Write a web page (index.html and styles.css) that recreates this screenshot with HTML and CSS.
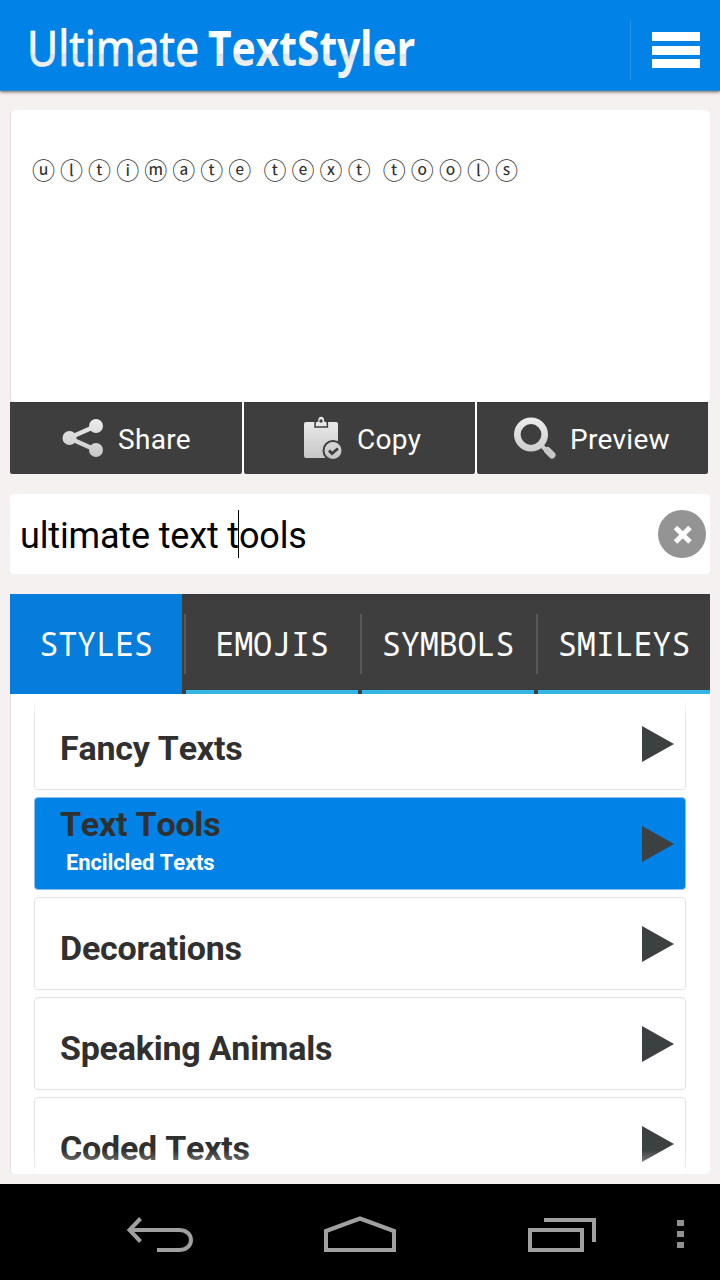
FILE: index.html
```html
<!DOCTYPE html>
<html lang="en">

<head>
  <meta charset="UTF-8" />
  <meta name="viewport" content="width=device-width, initial-scale=1.0" />
  <title>Ultimate TextStyler</title>
  <link rel="stylesheet" href="styles.css">
</head>

<body>
  <header class="header">
    <svg class="logo" width="420" height="80" viewBox="0 0 420 80">
      <defs>
        <linearGradient id="logoFill" gradientUnits="userSpaceOnUse" x1="0" y1="20" x2="0" y2="57">
          <stop offset="0" stop-color="#fff" />
          <stop offset="0.63" stop-color="#fff" />
          <stop offset="0.65" stop-color="#e2e4e6" />
          <stop offset="1" stop-color="#f0f0f0" />
        </linearGradient>
      </defs>
      <text class="logo-light" x="7" y="56" textLength="172" lengthAdjust="spacingAndGlyphs">Ultimate</text>
      <text class="logo-bold" x="188" y="56" textLength="207" lengthAdjust="spacingAndGlyphs">TextStyler</text>
    </svg>
    <button type="button" class="menu-btn" aria-label="Menu">
      <span></span>
      <span></span>
      <span></span>
    </button>
  </header>

  <main class="content">
    <section class="output">ⓤⓛⓣⓘⓜⓐⓣⓔ ⓣⓔⓧⓣ ⓣⓞⓞⓛⓢ</section>

    <div class="actions">
      <button type="button" class="action-btn share">
        <svg width="44" height="44" viewBox="0 0 44 44">
          <defs>
            <linearGradient id="metal" gradientUnits="userSpaceOnUse" x1="0" y1="2" x2="0" y2="44">
              <stop offset="0" stop-color="#ececec" />
              <stop offset="1" stop-color="#c4c4c4" />
            </linearGradient>
          </defs>
          <path d="M35 9 8 21 35 33" fill="none" stroke="url(#metal)" stroke-width="4.5" />
          <circle cx="35" cy="9" r="7" fill="url(#metal)" />
          <circle cx="8.500" cy="21" r="7" fill="url(#metal)" />
          <circle cx="35" cy="33" r="7" fill="url(#metal)" />
        </svg>
        <span>Share</span>
      </button>
      <button type="button" class="action-btn copy">
        <svg width="44" height="44" viewBox="0 0 44 44">
          <rect x="4" y="5" width="34" height="36" rx="2" fill="url(#metal)" />
          <path d="M15 10V6.500q0-2.500 2.500-2.500 0-5 3.700-5t3.700 5q2.500 0 2.500 2.500V10z" fill="url(#metal)" stroke="#3e3e3e" stroke-width="1.500" />
          <circle cx="21" cy="4" r="1.700" fill="#3e3e3e" />
          <circle cx="33" cy="33.500" r="9.500" fill="url(#metal)" stroke="#3e3e3e" stroke-width="2" />
          <path d="m29 33.500 3 3 6-5" fill="none" stroke="#3e3e3e" stroke-width="2.800" />
        </svg>
        <span>Copy</span>
      </button>
      <button type="button" class="action-btn preview">
        <svg width="44" height="44" viewBox="0 0 44 44">
          <path d="m28 28 6 6" stroke="#cdcdcd" stroke-width="4" />
          <path d="m34.500 33.500 4.500 4.500" stroke="#c8c8c8" stroke-width="7" stroke-linecap="round" />
          <circle cx="18" cy="17.500" r="13.700" fill="none" stroke="url(#metal)" stroke-width="6.600" />
        </svg>
        <span>Preview</span>
      </button>
    </div>

    <div class="text-input">
      <span class="typed">ultimate text t<i class="caret"></i>ools</span>
      <button type="button" class="clear-btn" aria-label="Clear">
        <svg width="48" height="48" viewBox="0 0 48 48">
          <circle cx="24" cy="24" r="24" fill="#949494" />
          <path d="m17.500 17.500 14.500 14.500m0-14.500-14.500 14.500" stroke="#fff" stroke-width="5" />
        </svg>
      </button>
    </div>

    <nav class="tabs">
      <a class="tab active">STYLES</a>
      <a class="tab">EMOJIS</a>
      <a class="tab">SYMBOLS</a>
      <a class="tab">SMILEYS</a>
    </nav>

    <section class="list">
      <div class="item">
        <div class="item-text">Fancy Texts</div>
        <svg class="arrow" width="33" height="38" viewBox="0 0 33 38"><path d="M0 1v36l32-18z" /></svg>
      </div>
      <div class="item selected">
        <div class="item-text">Text Tools<small>Encilcled Texts</small></div>
        <svg class="arrow" width="33" height="38" viewBox="0 0 33 38"><path d="M0 1v36l32-18z" /></svg>
      </div>
      <div class="item">
        <div class="item-text">Decorations</div>
        <svg class="arrow" width="33" height="38" viewBox="0 0 33 38"><path d="M0 1v36l32-18z" /></svg>
      </div>
      <div class="item">
        <div class="item-text">Speaking Animals</div>
        <svg class="arrow" width="33" height="38" viewBox="0 0 33 38"><path d="M0 1v36l32-18z" /></svg>
      </div>
      <div class="item">
        <div class="item-text">Coded Texts</div>
        <svg class="arrow" width="33" height="38" viewBox="0 0 33 38"><path d="M0 1v36l32-18z" /></svg>
      </div>
    </section>
  </main>

  <footer class="navbar">
    <svg width="68" height="36" viewBox="0 0 68 36">
      <path d="M14.500 2.500 3.500 14l11 11.500M3 14h50c7 0 12 4 12 10s-5 10-12 10H31" />
    </svg>
    <svg width="74" height="40" viewBox="0 0 74 40">
      <path d="M4 36V17L38 4.500 72 17v19z" />
    </svg>
    <svg width="70" height="36" viewBox="0 0 70 36">
      <path d="M4 14h52v20H4zM18 4h50v22" />
    </svg>
    <svg class="more" width="8" height="30" viewBox="0 0 8 30">
      <path d="M0 1h7v6H0zM0 12h7v6H0zM0 23h7v6H0z" />
    </svg>
  </footer>
</body>

</html>
```
FILE: styles.css
```css
:root {
  --primary: #0082e6;
  --dark: #3e3e3e;
  --background: #f5f1f0;
  --text-color: #303030;
  --border: #e2e2e2;
}

* {
  box-sizing: border-box;
}

body {
  margin: 0;
  width: 720px;
  height: 1280px;
  overflow: hidden;
  display: flex;
  flex-direction: column;
  font-family: Roboto, sans-serif;
  font-kerning: none;
  background: var(--background);
  color: var(--text-color);
}

button {
  border: none;
  padding: 0;
  background: none;
  font-family: inherit;
}

svg {
  display: block;
  flex: none;
}

.header {
  height: 91px;
  flex: none;
  display: flex;
  justify-content: space-between;
  padding: 10px 20px 0;
  background: var(--primary);
  border-bottom: 1px solid #2389d3;
  box-shadow: 0 1px 3px rgba(0, 0, 0, 0.6);
}

.logo {
  overflow: visible;
}

.logo text {
  font-family: "Noto Sans", sans-serif;
  font-size: 49px;
  fill: url(#logoFill);
}

.logo .logo-light {
  font-weight: 400;
  stroke: url(#logoFill);
  stroke-width: 0.7px;
}

.logo .logo-bold {
  font-weight: 700;
}

.menu-btn {
  width: 70px;
  height: 60px;
  margin-top: 10px;
  padding: 12px 0 12px 21px;
  border-left: 1px solid #2b94e8;
  display: flex;
  flex-direction: column;
  justify-content: space-between;
}

.menu-btn span {
  width: 48px;
  height: 9px;
  background: #fff;
}

.content {
  display: flex;
  flex-direction: column;
  padding: 19px 10px 10px;
  height: 1093px;
}

.output {
  height: 292px;
  padding: 46px 21px;
  background: #fff;
  border-left: 1px solid var(--border);
  border-radius: 5px;
  font-family: "DejaVu Sans Mono", "Noto Sans CJK JP", sans-serif;
  font-size: 23px;
  line-height: 30px;
  letter-spacing: 5.050px;
  word-spacing: -11.800px;
}

.actions {
  display: grid;
  grid-template-columns: 232px 231px 231px;
  gap: 2px;
  height: 72px;
  margin-bottom: 20px;
  background: linear-gradient(#fff, #fff) no-repeat 0 0 / 698px 100%;
}

.action-btn {
  display: flex;
  align-items: center;
  background: var(--dark);
  border-top: 1px solid #353535;
  border-radius: 0 0 2px 2px;
  color: #fff;
  font-size: 28px;
  letter-spacing: 0.300px;
}

.action-btn svg {
  margin-right: 13px;
  overflow: visible;
}

.action-btn span {
  margin-top: 2px;
}

.share {
  padding-left: 51px;
}

.copy {
  padding-left: 56px;
}

.preview {
  padding-left: 36px;
}

.text-input {
  height: 80px;
  margin-bottom: 20px;
  padding: 0 4px 0 10px;
  display: flex;
  align-items: center;
  justify-content: space-between;
  background: #fff;
  border-radius: 4px;
  color: #000;
  font-size: 36px;
  letter-spacing: -0.160px;
}

.typed {
  padding-top: 4px;
}

.caret {
  position: relative;
}

.caret::after {
  content: "";
  position: absolute;
  left: -1px;
  top: -5px;
  width: 1px;
  height: 48px;
  background: #000;
}

.tabs {
  height: 100px;
  flex: none;
  display: flex;
  gap: 4px;
  background: linear-gradient(#383838, var(--dark) 6px);
}

.tab {
  width: 172px;
  position: relative;
  display: flex;
  align-items: center;
  justify-content: center;
  border-bottom: 4px solid #33b5e5;
  padding-top: 2px;
  font-family: "Noto Sans Mono", "DejaVu Sans Mono", monospace;
  font-size: 32px;
  letter-spacing: -0.300px;
  color: #fff;
}

.tab.active {
  background: #067ddb;
  border-color: #067ddb;
}

.tab + .tab::before {
  content: "";
  position: absolute;
  left: -2px;
  top: 20px;
  width: 2px;
  height: 60px;
  background: #585858;
}

.list {
  position: relative;
  height: 480px;
  overflow: hidden;
  padding: 3px 24px 0 23px;
  background: #fff;
  border-left: 1px solid var(--border);
  border-radius: 0 0 5px 5px;
}

/* faded top and bottom edges of the scroll area */
.list::before,
.list::after {
  content: "";
  position: absolute;
  left: 0;
  right: 0;
}

.list::before {
  top: 0;
  height: 26px;
  background: linear-gradient(#fff 15%, rgba(255, 255, 255, 0));
}

.list::after {
  bottom: 0;
  height: 24px;
  background: linear-gradient(rgba(255, 255, 255, 0), rgba(255, 255, 255, 0.300) 50%, #fff);
}

.item {
  height: 93px;
  margin-bottom: 7px;
  padding: 0 10px 0 25px;
  display: flex;
  align-items: center;
  justify-content: space-between;
  border: 1px solid var(--border);
  border-radius: 4px;
}

.item-text {
  padding-top: 9px;
  font-size: 34px;
  font-weight: 700;
  line-height: 40px;
  letter-spacing: -0.220px;
}

.item-text small {
  display: block;
  padding-left: 6px;
  font-size: 22px;
  line-height: 37px;
  letter-spacing: -0.120px;
  color: #fff;
}

.selected {
  background: var(--primary);
  border-color: #8cbfe6;
}

.selected .item-text {
  padding: 0 0 3px;
}

.arrow {
  fill: #3c4040;
}

.navbar {
  height: 96px;
  display: flex;
  align-items: center;
  padding: 4px 0 0 126px;
  background: #000;
}

.navbar svg {
  fill: none;
  stroke: #a0a0a0;
  stroke-width: 4;
}

.navbar svg:nth-child(2) {
  margin-left: 128px;
}

.navbar svg:nth-child(3) {
  margin-left: 130px;
}

.navbar .more {
  margin-left: 81px;
  fill: #919191;
  stroke: none;
}
```
